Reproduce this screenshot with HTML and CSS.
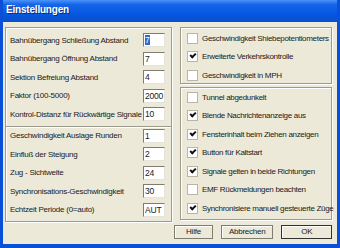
FILE: index.html
```html
<!DOCTYPE html>
<html lang="de">
<head>
    <meta charset="UTF-8">
    <link rel="stylesheet" href="styles.css">
</head>
<body>
    <div class="window">
        <div class="titlebar">Einstellungen</div>
        <div class="content">
            <div class="left">
                <div class="section">
                    <div class="row"><span>Bahnübergang Schließung Abstand</span><span class="field"><span class="sel">7</span></span></div>
                    <div class="row"><span>Bahnübergang Öffnung Abstand</span><span class="field">7</span></div>
                    <div class="row"><span>Sektion Befreiung Abstand</span><span class="field">4</span></div>
                    <div class="row"><span>Faktor (100-5000)</span><span class="field">2000</span></div>
                    <div class="row"><span>Kontrol-Distanz für Rückwärtige Signale</span><span class="field">10</span></div>
                </div>
                <div class="section second">
                    <div class="row"><span>Geschwindigkeit Auslage Runden</span><span class="field">1</span></div>
                    <div class="row"><span>Einfluß der Steigung</span><span class="field">2</span></div>
                    <div class="row"><span>Zug - Sichtweite</span><span class="field">24</span></div>
                    <div class="row"><span>Synchronisations-Geschwindigkeit</span><span class="field">30</span></div>
                    <div class="row"><span>Echtzeit Periode (0=auto)</span><span class="field">AUT</span></div>
                </div>
            </div>
            <div class="right">
                <div class="group top">
                    <div class="check"><span class="box"></span>Geschwindigkeit Shiebepotentiometers</div>
                    <div class="check"><span class="box on"></span>Erweiterte Verkehrskontrolle</div>
                    <div class="check"><span class="box"></span>Geschwindigkeit in MPH</div>
                </div>
                <div class="group bottom">
                    <div class="check"><span class="box"></span>Tunnel abgedunkelt</div>
                    <div class="check"><span class="box on"></span>Blende Nachrichtenanzeige aus</div>
                    <div class="check"><span class="box on"></span>Fensterinhalt beim Ziehen anzeigen</div>
                    <div class="check"><span class="box on"></span>Button für Kaltstart</div>
                    <div class="check"><span class="box on"></span>Signale gelten in beide Richtungen</div>
                    <div class="check"><span class="box"></span>EMF Rückmeldungen beachten</div>
                    <div class="check"><span class="box on"></span>Synchronisiere manuell gesteuerte Züge</div>
                </div>
                <div class="buttons">
                    <span class="btn hilfe">Hilfe</span>
                    <span class="btn abbr">Abbrechen</span>
                    <span class="btn ok">OK</span>
                </div>
            </div>
        </div>
    </div>
</body>
</html>
```

FILE: styles.css
```css
body {
    margin: 0;
    font-family: "Liberation Sans", Arial, sans-serif;
    font-size: 8px;
    letter-spacing: -0.25px;
    color: #1a1a1a;
}

.window {
    width: 340px;
    height: 248px;
    box-sizing: border-box;
    background: #ece9d8;
    border-left: 3px solid #0a4fd8;
    border-right: 3px solid #0a4fd8;
    border-bottom: 4px solid #0a4fd8;
    display: flex;
    flex-direction: column;
    overflow: hidden;
}

.titlebar {
    height: 22px;
    flex-shrink: 0;
    margin: 0 -3px;
    padding-left: 6px;
    background: linear-gradient(to bottom, #4a94f8 0%, #1666ea 20%, #0558e0 60%, #0a4fd0 100%);
    color: #ffffff;
    font-weight: bold;
    font-size: 10px;
    letter-spacing: -0.2px;
    line-height: 20px;
    text-shadow: 1px 1px 0 #0a2a80;
}

.content {
    display: flex;
    padding: 5px 4px 0 2px;
    gap: 8px;
}

.left {
    width: 167px;
    height: 195px;
    box-sizing: border-box;
    border: 1px solid #9c9a8c;
    box-shadow: inset 1px 1px 0 #ffffff, 1px 1px 0 #ffffff;
    display: flex;
    flex-direction: column;
}

.section {
    padding: 3px 0 2px 4px;
}

.section.second {
    border-top: 1px solid #9c9a8c;
    box-shadow: inset 0 1px 0 #ffffff;
    padding-top: 0;
}

.row {
    height: 18.5px;
    display: flex;
    align-items: center;
    justify-content: space-between;
    padding-right: 6px;
    white-space: nowrap;
}

.field {
    width: 22px;
    height: 14px;
    flex-shrink: 0;
    box-sizing: border-box;
    background: #ffffff;
    border-top: 1px solid #7f7d70;
    border-left: 1px solid #7f7d70;
    border-right: 1px solid #e6e4da;
    border-bottom: 1px solid #e6e4da;
    padding-left: 1px;
    font-size: 8.5px;
    letter-spacing: -0.2px;
    line-height: 12px;
    overflow: hidden;
    white-space: nowrap;
}

.sel {
    background: #316ac5;
    color: #ffffff;
}

.right {
    width: 152px;
    display: flex;
    flex-direction: column;
}

.group {
    box-sizing: border-box;
    border: 1px solid #9c9a8c;
    box-shadow: inset 1px 1px 0 #ffffff, 1px 1px 0 #ffffff;
    padding: 1px 0 0 6px;
}

.group.top {
    height: 57px;
    margin-bottom: 3px;
}

.group.bottom {
    height: 133px;
    padding-top: 0;
}

.check {
    height: 18.5px;
    display: flex;
    align-items: center;
    white-space: nowrap;
    letter-spacing: -0.32px;
}

.box {
    width: 9px;
    height: 9px;
    flex-shrink: 0;
    margin-right: 4px;
    background: #ffffff;
    border: 1px solid #b8b6a8;
    position: relative;
}

.box.on::after {
    content: "";
    position: absolute;
    left: 2px;
    top: 1px;
    width: 4px;
    height: 2px;
    border-left: 2px solid #111111;
    border-bottom: 2px solid #111111;
    transform: rotate(-45deg);
}

.buttons {
    display: flex;
    gap: 8px;
    margin-top: 5px;
    margin-left: -6px;
}

.btn {
    height: 12px;
    background: #ece9d8;
    border: 1px solid #7f7d70;
    box-shadow: inset 1px 1px 0 #ffffff;
    text-align: center;
    line-height: 12px;
}

.hilfe {
    width: 38px;
}

.abbr {
    width: 52px;
}

.ok {
    width: 50px;
    border-color: #303030;
}
```
